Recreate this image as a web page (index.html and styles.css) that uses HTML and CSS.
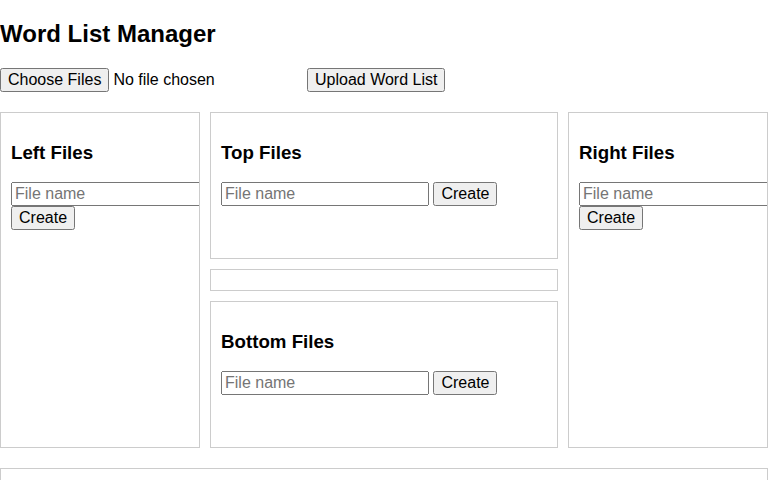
FILE: index.html
```html
<!DOCTYPE html>
<html>
<head>
<meta charset="utf-8">
<title>Word List Manager</title>
<link rel="stylesheet" href="styles.css">
</head>
<body>
<h2 class="title">Word List Manager</h2>
<div class="controls">
  <input class="file" type="file" multiple>
  <button class="btn">Upload Word List</button>
</div>
<div class="layout">
  <section class="panel">
    <h3 class="panel-title">Left Files</h3>
    <input class="name" type="text" placeholder="File name"> <button class="btn">Create</button>
  </section>
  <div class="center">
    <section class="panel grow">
      <h3 class="panel-title">Top Files</h3>
      <input class="name" type="text" placeholder="File name"> <button class="btn">Create</button>
    </section>
    <div class="panel bar"></div>
    <section class="panel grow">
      <h3 class="panel-title">Bottom Files</h3>
      <input class="name" type="text" placeholder="File name"> <button class="btn">Create</button>
    </section>
  </div>
  <section class="panel">
    <h3 class="panel-title">Right Files</h3>
    <input class="name" type="text" placeholder="File name"> <button class="btn">Create</button>
  </section>
</div>
<div class="panel footer"></div>
</body>
</html>
```
FILE: styles.css
```css
body {
  margin: 0;
  font-family: "Liberation Sans", Arial, sans-serif;
  font-size: 16px;
  color: #000;
  background: #fff;
}
.title {
  font-size: 24px;
  margin: 19.92px 0;
}
.controls {
  display: flex;
  align-items: center;
  gap: 4px;
}
.file {
  width: 303px;
  font: inherit;
  margin: 0;
}
.btn {
  font: inherit;
  margin: 0;
}
.name {
  font: inherit;
  margin: 0;
  box-sizing: border-box;
  width: 208px;
}
.layout {
  display: grid;
  grid-template-columns: 200px 1fr 200px;
  gap: 10px;
  margin-top: 20px;
  height: 336px;
}
.panel {
  border: 1px solid #ccc;
  padding: 10px;
  overflow: hidden;
}
.panel-title {
  font-size: 18.72px;
  margin: 18.72px 0;
}
.center {
  display: flex;
  flex-direction: column;
  gap: 10px;
}
.grow {
  flex: 1;
}
.bar {
  height: 0;
}
.footer {
  margin-top: 20px;
  height: 40px;
}
```
